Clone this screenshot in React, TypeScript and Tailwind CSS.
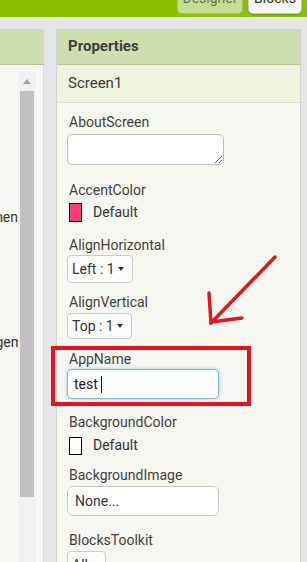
import React from "react";

const Label = ({ children, className = "" }: { children: React.ReactNode; className?: string }) => (
  <div className={"pl-[2px] leading-[16px] text-[#3f3f3f] " + className}>{children}</div>
);

const FakeSelect = ({ value, width }: { value: string; width: string }) => (
  <div
    className={
      "flex items-center justify-between rounded-[4px] border border-[#cacaca] bg-[#fdfdfd] pl-[4px] pr-[8px] text-[#333] " +
      width
    }
  >
    <span>{value}</span>
    <svg width="6" height="4" viewBox="0 0 6 4">
      <polygon points="0,0 6,0 3,4" fill="#333" />
    </svg>
  </div>
);

const Swatch = ({ color, height }: { color: string; height: string }) => (
  <div className="flex items-center">
    <div className={"ml-[2px] w-[13px] shrink-0 border border-black " + color + " " + height} />
    <span className="ml-[11px] text-[#333]">Default</span>
  </div>
);

export default function App() {
  return (
    <div className="relative h-[562px] w-[307px] overflow-hidden bg-[#e5e5e5] font-['Roboto',sans-serif] text-[14px]">
      {/* top bar */}
      <div className="flex h-[17px] items-end justify-end gap-[5px] bg-[#8dc100] pb-[3px] pr-[5px]">
        <div className="flex h-[30px] w-[66px] shrink-0 items-center justify-center rounded-b-[5px] border border-[#a8c46a] bg-[#c6dc95] pb-[2px] text-[#66744c]">
          Designer
        </div>
        <div className="flex h-[30px] w-[54px] shrink-0 items-center justify-center rounded-b-[5px] border border-[#c8c8c8] bg-[#f6f6f6] pb-[2px] text-[#333] shadow-[0_1px_2px_rgba(0,0,0,0.2)]">
          Blocks
        </div>
      </div>

      <div className="flex h-[545px] pt-[12px]">
        {/* left panel, mostly scrolled away */}
        <div className="flex w-[44px] shrink-0 flex-col">
          <div className="h-[36px] shrink-0 border-b border-[#b9c792] bg-[#cfdeae]" />
          <div className="flex flex-1 border-r border-[#d8d8d8] bg-[#f8f8f4]">
            <div className="flex w-[18px] shrink-0 flex-col items-end overflow-hidden text-[#333]">
              <div className="mt-[144px] whitespace-nowrap leading-[17px]">hen</div>
              <div className="-mr-[5px] mt-[108px] whitespace-nowrap leading-[17px]">Arrangem</div>
            </div>
            <div className="mt-[7px] flex w-[18px] shrink-0 flex-col bg-[#f1f1f1]">
              <div className="flex h-[19px] shrink-0 items-center justify-center">
                <svg width="8" height="5" viewBox="0 0 8 5">
                  <polygon points="0,5 8,5 4,0" fill="#a3a3a3" />
                </svg>
              </div>
              <div className="mx-[2px] h-[406px] shrink-0 bg-[#c1c1c1]" />
            </div>
          </div>
        </div>

        {/* properties panel */}
        <div className="ml-[12px] flex w-[245px] shrink-0 flex-col border-x border-[#d4d4d4]">
          <div className="flex h-[36px] shrink-0 items-center border-b border-[#b9c792] bg-[#cfdeae] px-[11px] text-[15px] font-bold text-[#3f3f3f]">
            Properties
          </div>
          <div className="flex h-[38px] shrink-0 items-center border-b border-[#dcdfd0] bg-[#eef3df] px-[11px] text-[15px] text-[#3a3a3a]">
            Screen1
          </div>
          <div className="flex-1 bg-[#f7f7f2] pl-[10px] pt-[11px]">
            <Label>AboutScreen</Label>
            <textarea className="mt-[4px] block h-[31px] w-[157px] rounded-[5px] border border-[#bdbdbd] bg-white" />

            <Label className="mt-[17px]">AccentColor</Label>
            <div className="mt-[4px]">
              <Swatch color="bg-[#ff3d7a]" height="h-[19px]" />
            </div>

            <Label className="mt-[14px]">AlignHorizontal</Label>
            <div className="mt-[2px] flex h-[28px]">
              <FakeSelect value="Left : 1" width="w-[66px]" />
            </div>

            <Label className="mt-[11px]">AlignVertical</Label>
            <div className="mt-[3px] flex h-[26px]">
              <FakeSelect value="Top : 1" width="w-[65px]" />
            </div>

            <Label className="mt-[12px]">AppName</Label>
            <div className="mt-[2px] flex h-[30px] w-[152px] items-center rounded-[5px] border border-[#84b8e8] bg-white pl-[6px] text-[#222] shadow-[0_0_4px_#9fc9f0]">
              test
              <span className="ml-[3px] h-[17px] w-px bg-[#222]" />
            </div>

            <Label className="mt-[15px]">BackgroundColor</Label>
            <div className="mt-[5px]">
              <Swatch color="bg-white" height="h-[18px]" />
            </div>

            <Label className="mt-[11px]">BackgroundImage</Label>
            <div className="mt-[3px] flex h-[30px] w-[152px] items-center rounded-[6px] border border-[#c9c9c9] bg-white pl-[7px] text-[#333]">
              None...
            </div>

            <Label className="mt-[16px]">BlocksToolkit</Label>
            <div className="mt-[3px] flex h-[28px]">
              <FakeSelect value="All" width="w-[39px]" />
            </div>
          </div>
        </div>
      </div>

      {/* annotation */}
      <div className="absolute left-[51px] top-[346px] h-[60px] w-[200px] border-[4px] border-[#e3121c]" />
      <svg className="pointer-events-none absolute left-0 top-0" width="307" height="562" viewBox="0 0 307 562">
        <g stroke="#e8141c" strokeWidth="3.5" strokeLinecap="round" fill="none">
          <path d="M275 257 L211 323" />
          <path d="M209 293 L211 323" />
          <path d="M211 322 L242 318" />
        </g>
      </svg>
    </div>
  );
}
